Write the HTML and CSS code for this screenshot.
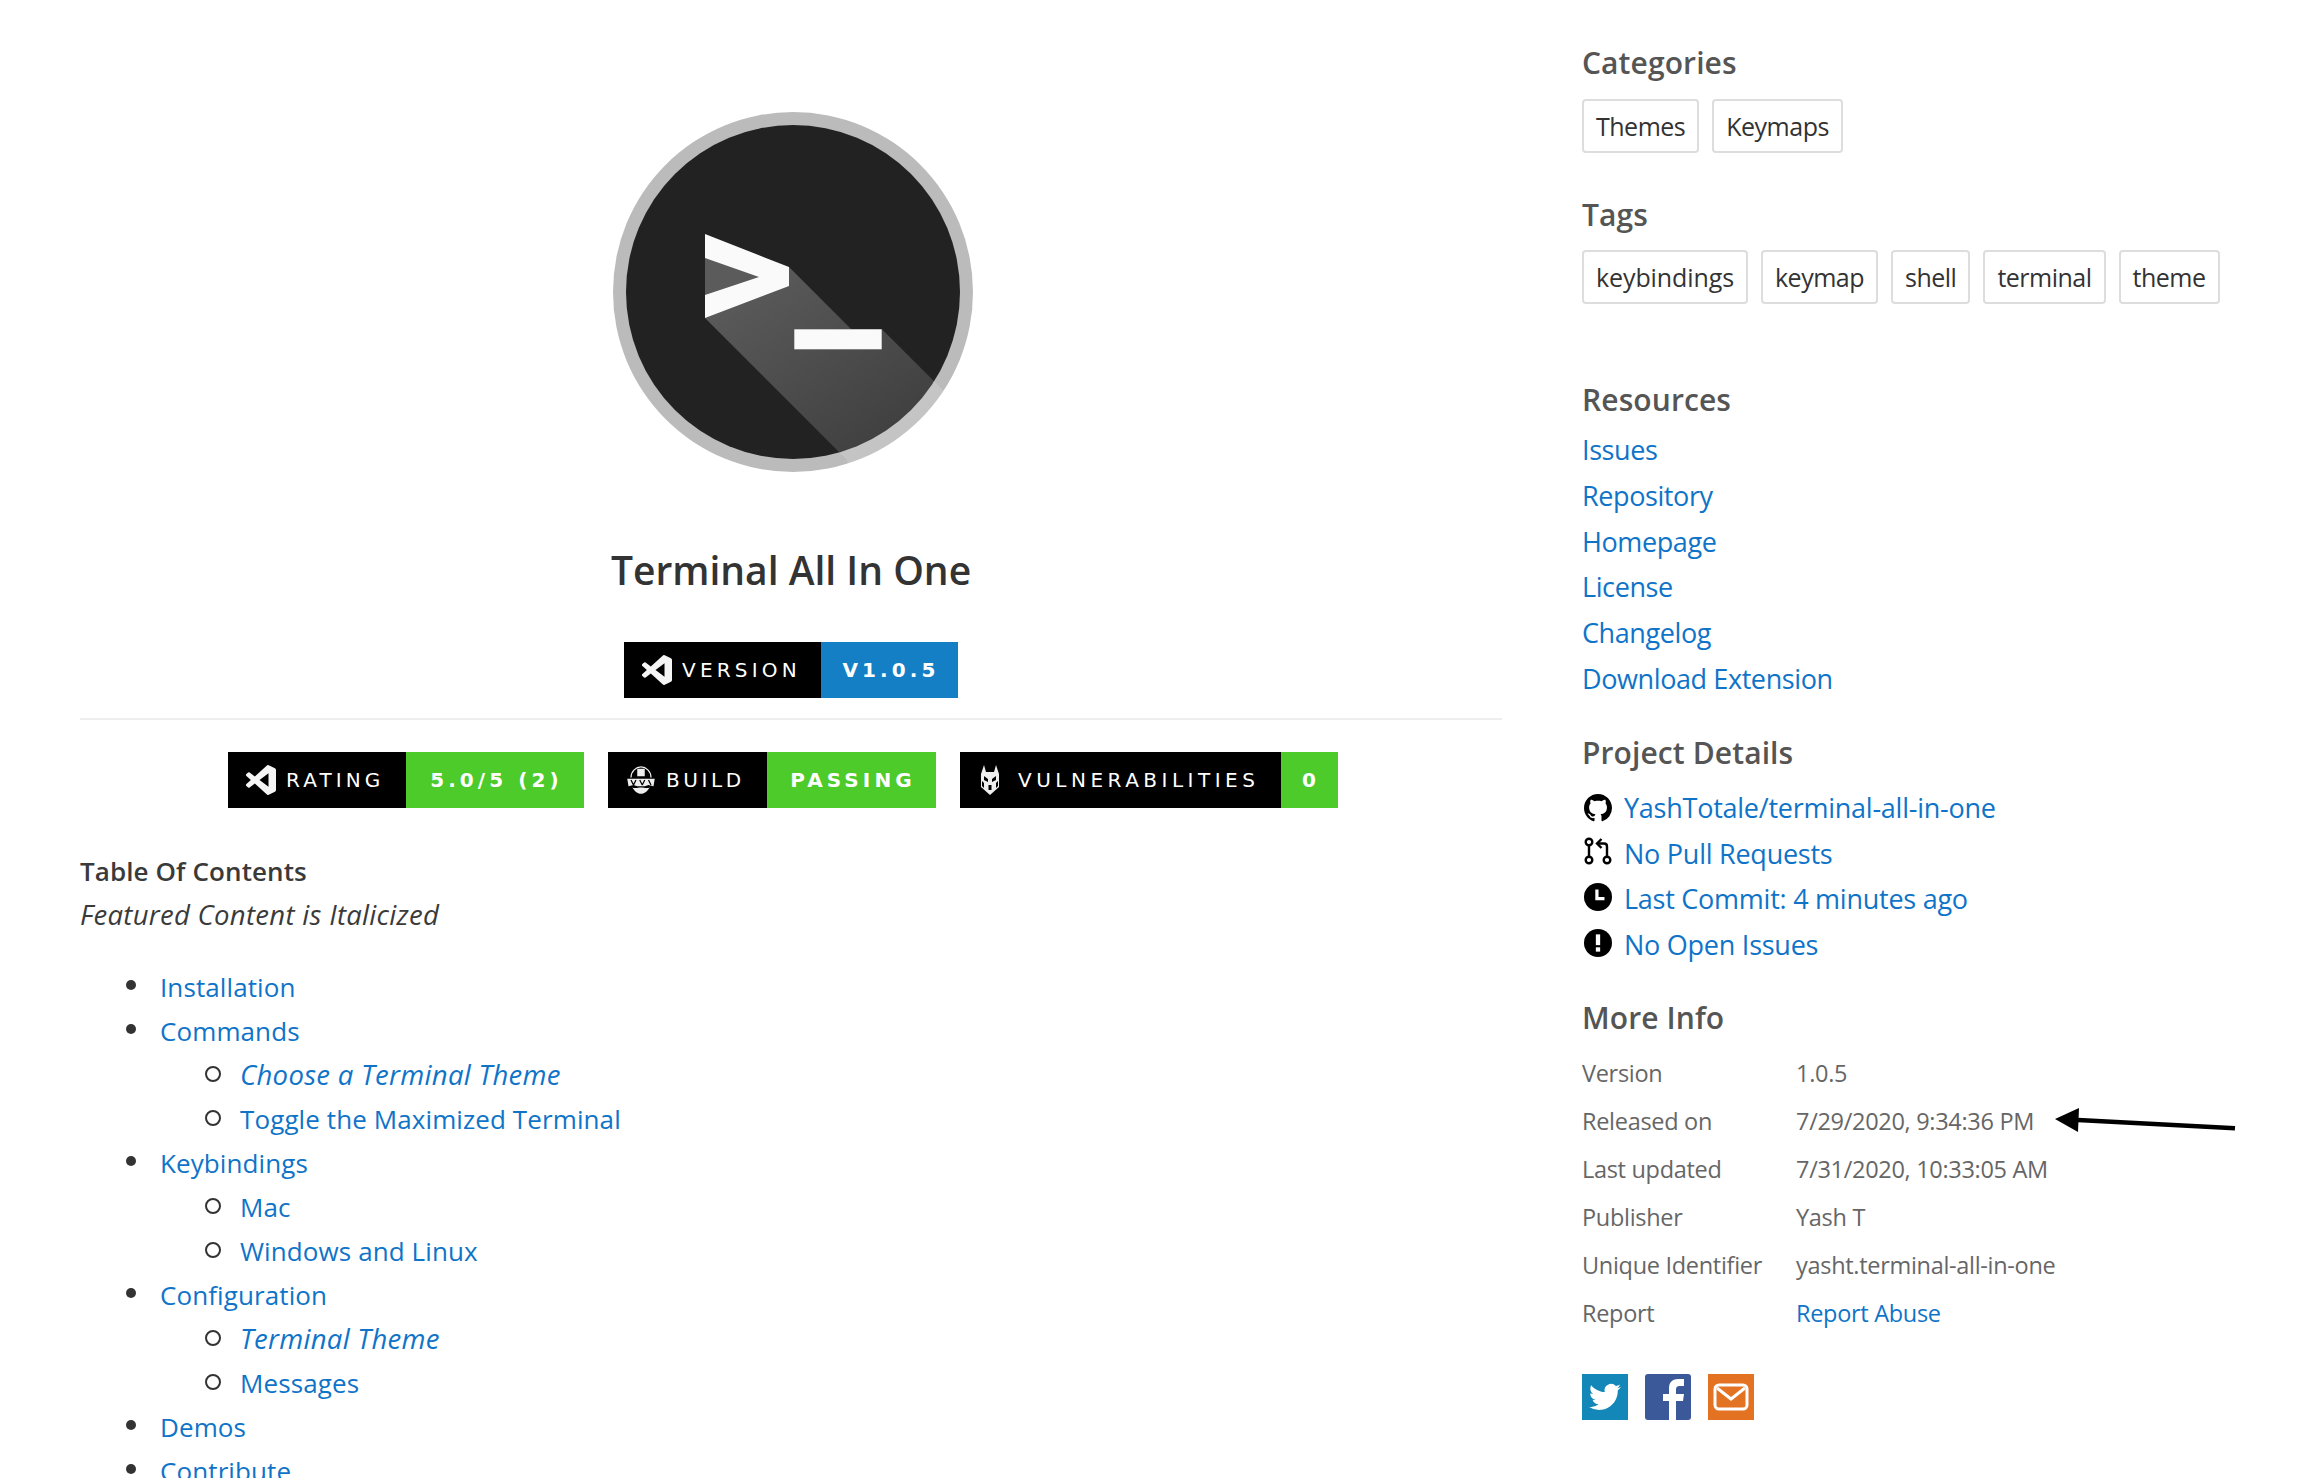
FILE: index.html
```html
<!DOCTYPE html>
<html lang="en">
<head>
<meta charset="utf-8">
<title>Terminal All In One</title>
<link rel="stylesheet" href="styles.css">
</head>
<body>
<svg width="0" height="0" class="defs">
  <defs>
    <symbol id="vsc" viewBox="0 0 24 24"><path fill="#f5f5f5" d="M23.15 2.587L18.21.21a1.494 1.494 0 0 0-1.705.29l-9.46 8.63-4.12-3.128a.999.999 0 0 0-1.276.057L.327 7.261A1 1 0 0 0 .326 8.74L3.899 12 .326 15.26a1 1 0 0 0 .001 1.479L1.65 17.94a.999.999 0 0 0 1.276.057l4.12-3.128 9.46 8.63a1.492 1.492 0 0 0 1.704.29l4.942-2.377A1.5 1.5 0 0 0 24 20.06V3.939a1.5 1.5 0 0 0-.85-1.352zm-5.146 14.861L10.826 12l7.178-5.448v10.896z"/></symbol>
  </defs>
</svg>
<div class="page">
  <main class="main">
    <div class="center logo-wrap">
      <svg class="logo" viewBox="0 0 360 360" width="360" height="360">
        <defs>
          <clipPath id="outer"><circle cx="180" cy="180" r="180"/></clipPath>
          <linearGradient id="sh" x1="0.1" y1="0.1" x2="0.75" y2="0.85">
            <stop offset="0" stop-color="#fff" stop-opacity="0.26"/>
            <stop offset="1" stop-color="#fff" stop-opacity="0.13"/>
          </linearGradient>
        </defs>
        <circle cx="180" cy="180" r="180" fill="#bbb"/>
        <circle cx="180" cy="180" r="167" fill="#222"/>
        <polygon clip-path="url(#outer)" fill="url(#sh)" points="92,146 176,155 238,217 268.7,217 360,308 360,360 240,360 233,347 92,206"/>
        <polygon fill="#fafafa" points="92,122 176,155 176,174 92,206 92,183 146,165 92,146"/>
        <rect x="181.3" y="217.3" width="87.4" height="20" fill="#fafafa"/>
      </svg>
    </div>
    <h1 class="title">Terminal All In One</h1>
    <div class="center badge-top">
      <span class="badge">
        <span class="b-label b-version"><svg class="b-icon"><use href="#vsc"/></svg>VERSION</span>
        <span class="b-value b-blue w-version">V1.0.5</span>
      </span>
    </div>
    <hr class="rule">
    <div class="badge-row">
      <span class="badge">
        <span class="b-label b-rating"><svg class="b-icon"><use href="#vsc"/></svg>RATING</span>
        <span class="b-value b-green w-rating">5.0/5 (2)</span>
      </span>
      <span class="badge">
        <span class="b-label b-build">
          <svg class="b-icon" viewBox="0 0 24 24">
            <path fill="none" stroke="#eee" stroke-width="1" d="M4 10c0-5 4-8.500 8-8.500s8 3.500 8 8.500"/>
            <rect x="9" y="3" width="6" height="6" fill="#eee"/>
            <path fill="#eee" d="M1 11h22l-1 6-4-1-3 1h-6l-3-1-4 1z"/>
            <path fill="none" stroke="#000" stroke-width="1" d="M4 12l2 4M8 12l-2 4M11 12l2 4M15 12l-2 4M18 12l2 4"/>
            <path fill="#eee" d="M5 18c2 3 4 5 7 5s5-2 7-5c-2 1-5 0-7 0s-5 1-7 0z"/>
          </svg>BUILD</span>
        <span class="b-value b-green w-build">PASSING</span>
      </span>
      <span class="badge">
        <span class="b-label b-vuln">
          <svg class="b-icon b-dog" viewBox="0 0 20 30">
            <path fill="#eee" d="M4 0l2 7h8l2-7 3 9v13l-9 8-9-8V9z"/>
            <path fill="#000" d="M4 11l4 3v3l-4-2zM16 11l-4 3v3l4-2zM8.500 20h3v5h-3zM2 16v5l2 2v-5zM18 16v5l-2 2v-5z"/>
          </svg>VULNERABILITIES</span>
        <span class="b-value b-green w-vuln">0</span>
      </span>
    </div>
    <p class="toc-head">Table Of Contents</p>
    <p class="toc-note">Featured Content is Italicized</p>
    <ul class="toc">
      <li><a href="#">Installation</a></li>
      <li><a href="#">Commands</a>
        <ul>
          <li><a href="#"><em>Choose a Terminal Theme</em></a></li>
          <li><a href="#">Toggle the Maximized Terminal</a></li>
        </ul>
      </li>
      <li><a href="#">Keybindings</a>
        <ul>
          <li><a href="#">Mac</a></li>
          <li><a href="#">Windows and Linux</a></li>
        </ul>
      </li>
      <li><a href="#">Configuration</a>
        <ul>
          <li><a href="#"><em>Terminal Theme</em></a></li>
          <li><a href="#">Messages</a></li>
        </ul>
      </li>
      <li><a href="#">Demos</a></li>
      <li><a href="#">Contribute</a></li>
    </ul>
  </main>
  <aside class="side">
    <h2 class="side-h h-cat">Categories</h2>
    <div class="tags tags-cat">
      <a class="tag" href="#">Themes</a>
      <a class="tag" href="#">Keymaps</a>
    </div>
    <h2 class="side-h h-tags">Tags</h2>
    <div class="tags">
      <a class="tag tag-wide" href="#">keybindings</a>
      <a class="tag" href="#">keymap</a>
      <a class="tag" href="#">shell</a>
      <a class="tag" href="#">terminal</a>
      <a class="tag" href="#">theme</a>
    </div>
    <h2 class="side-h h-res">Resources</h2>
    <ul class="links">
      <li><a href="#">Issues</a></li>
      <li><a href="#">Repository</a></li>
      <li><a href="#">Homepage</a></li>
      <li><a href="#">License</a></li>
      <li><a href="#">Changelog</a></li>
      <li><a href="#">Download Extension</a></li>
    </ul>
    <h2 class="side-h h-proj">Project Details</h2>
    <ul class="links details">
      <li><svg class="d-icon" viewBox="0 0 16 16"><path fill="#000" d="M8 0C3.58 0 0 3.58 0 8c0 3.54 2.29 6.53 5.47 7.59.4.07.55-.17.55-.38 0-.19-.01-.82-.01-1.49-2.01.37-2.53-.49-2.69-.94-.09-.23-.48-.94-.82-1.13-.28-.15-.68-.52-.01-.53.63-.01 1.08.58 1.23.82.72 1.21 1.87.87 2.33.66.07-.52.28-.87.51-1.07-1.78-.2-3.64-.89-3.64-3.95 0-.87.31-1.59.82-2.15-.08-.2-.36-1.02.08-2.12 0 0 .67-.21 2.2.82.64-.18 1.32-.27 2-.27.68 0 1.36.09 2 .27 1.53-1.04 2.2-.82 2.2-.82.44 1.1.16 1.92.08 2.12.51.56.82 1.27.82 2.15 0 3.07-1.87 3.75-3.65 3.95.29.25.54.73.54 1.48 0 1.07-.01 1.93-.01 2.2 0 .21.15.46.55.38A8.013 8.013 0 0016 8c0-4.42-3.58-8-8-8z"/></svg><a href="#">YashTotale/terminal-all-in-one</a></li>
      <li><svg class="d-icon d-up" viewBox="0 0 28 28"><g fill="none" stroke="#000" stroke-width="2.400"><circle cx="5" cy="5" r="3.300"/><circle cx="5" cy="23" r="3.300"/><circle cx="23" cy="23" r="3.300"/><path d="M5 8.300v11.400M23 19.700V9.500q0-3-3-3h-6"/><path d="M17.500 2l-4.500 4.500 4.500 4.500"/></g></svg><a href="#">No Pull Requests</a></li>
      <li><svg class="d-icon d-up" viewBox="0 0 26 26"><circle cx="13" cy="13" r="13" fill="#000"/><path d="M12 6v8.500h7" fill="none" stroke="#fff" stroke-width="3"/></svg><a href="#">Last Commit: 4 minutes ago</a></li>
      <li><svg class="d-icon d-up" viewBox="0 0 26 26"><circle cx="13" cy="13" r="13" fill="#000"/><rect x="11" y="5" width="4" height="10" fill="#fff"/><rect x="11" y="17" width="4" height="4" fill="#fff"/></svg><a href="#">No Open Issues</a></li>
    </ul>
    <h2 class="side-h h-info">More Info</h2>
    <div class="info">
      <div class="info-k">Version</div><div class="info-v">1.0.5</div>
      <div class="info-k">Released on</div><div class="info-v">7/29/2020, 9:34:36 PM</div>
      <div class="info-k">Last updated</div><div class="info-v">7/31/2020, 10:33:05 AM</div>
      <div class="info-k">Publisher</div><div class="info-v">Yash T</div>
      <div class="info-k">Unique Identifier</div><div class="info-v">yasht.terminal-all-in-one</div>
      <div class="info-k">Report</div><div class="info-v"><a href="#">Report Abuse</a></div>
    </div>
    <div class="share">
      <a class="share-btn s-tw" href="#" aria-label="Twitter"><svg viewBox="0 0 24 24" width="32" height="32"><path fill="#fff" d="M23.953 4.57a10 10 0 01-2.825.775 4.958 4.958 0 002.163-2.723c-.951.555-2.005.959-3.127 1.184a4.92 4.92 0 00-8.384 4.482C7.69 8.095 4.067 6.13 1.64 3.162a4.822 4.822 0 00-.666 2.475c0 1.71.87 3.213 2.188 4.096a4.904 4.904 0 01-2.228-.616v.06a4.923 4.923 0 003.946 4.827 4.996 4.996 0 01-2.212.085 4.936 4.936 0 004.604 3.417 9.867 9.867 0 01-6.102 2.105c-.39 0-.779-.023-1.17-.067a13.995 13.995 0 007.557 2.209c9.053 0 13.998-7.496 13.998-13.985 0-.21 0-.42-.015-.63A9.935 9.935 0 0024 4.59z"/></svg></a>
      <a class="share-btn s-fb" href="#" aria-label="Facebook"><svg viewBox="0 0 46 46" width="46" height="46"><path fill="#fff" d="M24 46V27h-6v-7h6v-6c0-6 4-9 9-9h6v7h-4c-3 0-4 1-4 4v4h8l-1 7h-7v19z"/></svg></a>
      <a class="share-btn s-ml" href="#" aria-label="Email"><svg viewBox="0 0 46 46" width="46" height="46"><g fill="none" stroke="#fff" stroke-width="3"><rect x="7" y="11" width="32" height="24" rx="4"/><path d="M9 14l14 11 14-11"/></g></svg></a>
    </div>
  </aside>
</div>
<svg class="arrow" width="186" height="36" viewBox="0 0 186 36"><path d="M26 20L183 28.300" stroke="#000" stroke-width="4.500" fill="none"/><polygon points="3,19 27,8 26,32" fill="#000"/></svg>
</body>
</html>
```
FILE: styles.css
```css
* { box-sizing: border-box; }
html, body { margin: 0; height: 100%; overflow: hidden; background: #fff; }
body { font-family: "Open Sans", "Noto Sans", sans-serif; color: #3a3a3a; font-size: 27px; position: relative; }
a { color: #0f74c8; text-decoration: none; }
.defs { position: absolute; }
.page { display: flex; align-items: flex-start; padding-left: 80px; }
.main { width: 1422px; flex: none; }
.center { display: flex; justify-content: center; }
.logo-wrap { padding: 112px 0 0 3px; }
.logo { display: block; }
.title { margin: 72px 0 0; text-align: center; font-size: 39px; font-weight: 600; line-height: 52px; color: #333; letter-spacing: 0; }
.badge-top { margin-top: 46px; }
.badge { display: inline-flex; height: 56px; align-items: stretch; font-family: "DejaVu Sans", sans-serif; font-size: 20px; letter-spacing: 4.100px; color: #fff; }
.b-label { background: #000; display: flex; align-items: center; padding-left: 18px; white-space: nowrap; }
.b-version { width: 197px; letter-spacing: 4.200px; }
.b-rating { width: 178px; }
.b-build { width: 159px; letter-spacing: 3.600px; }
.b-vuln { width: 321px; letter-spacing: 4.500px; }
.b-icon { width: 30px; height: 30px; margin-right: 10px; flex: none; }
.b-dog { width: 20px; margin: 0 18px 0 2px; }
.b-value { display: flex; align-items: center; justify-content: center; font-weight: 700; white-space: nowrap; padding-left: 3px; }
.b-blue { background: #147fc4; }
.b-green { background: #4ccb2a; }
.w-version { width: 137px; }
.w-rating { width: 178px; }
.w-build { width: 169px; }
.w-vuln { width: 57px; }
.rule { border: 0; height: 2px; background: #eee; margin: 20px 0 0; }
.badge-row { display: flex; justify-content: center; gap: 24px; margin-top: 32px; padding-right: 16px; }
.toc-head { margin: 41px 0 0; font-weight: 600; line-height: 44px; font-size: 26px; letter-spacing: 0.1px; }
.toc-note { margin: 0; font-style: italic; line-height: 44px; font-size: 27.500px; letter-spacing: 0.3px; }
.toc { margin: 28px 0 0; padding: 0 0 0 80px; line-height: 44px; font-size: 26px; letter-spacing: 0.1px; list-style: none; }
.toc ul { margin: 0; padding: 0 0 0 80px; list-style: none; }
.toc em { font-size: 27.500px; letter-spacing: 0.3px; }
.toc li { position: relative; }
.toc li::before { content: ""; position: absolute; left: -34px; top: 15px; width: 10px; height: 10px; border-radius: 50%; background: #333; }
.toc ul li::before { left: -35px; top: 13px; width: 12px; height: 12px; background: none; border: 2px solid #333; }
.side { width: 720px; flex: none; margin-left: 80px; }
.side-h { margin: 0; font-size: 30px; line-height: 40px; font-weight: 600; color: #555; letter-spacing: 0.1px; }
.h-cat { margin-top: 43px; }
.h-tags { margin-top: 42px; }
.h-res { margin-top: 76px; }
.h-proj { margin-top: 31px; }
.h-info { margin-top: 30px; }
.tags { display: flex; gap: 13px; margin-top: 15px; }
.tags-cat { margin-top: 16px; }
.tag { display: block; height: 54px; padding: 0 12px; border: 2px solid #ddd; border-radius: 4px; font-size: 25px; line-height: 51px; color: #333; letter-spacing: -0.5px; }
.tag-wide { letter-spacing: -0.1px; }
.links { list-style: none; margin: 7px 0 0; padding: 0; font-size: 27px; line-height: 45.800px; letter-spacing: -0.4px; }
.details { margin-top: 12px; letter-spacing: -0.25px; }
.details li { display: flex; align-items: center; gap: 12px; padding-left: 2px; }
.d-icon { width: 28px; height: 28px; flex: none; }
.d-up { margin-top: -5px; }
.info { display: grid; grid-template-columns: 214px 1fr; grid-auto-rows: 48px; margin-top: 11px; font-size: 23.500px; line-height: 48px; color: #666; letter-spacing: -0.3px; }
.share { display: flex; gap: 17px; margin-top: 37px; }
.share-btn { width: 46px; height: 46px; display: flex; align-items: center; justify-content: center; }
.s-tw { background: #1287b8; }
.s-fb { background: #3b5998; border-radius: 3px; }
.s-ml { background: #e37222; }
.arrow { position: absolute; left: 2052px; top: 1100px; }
```
